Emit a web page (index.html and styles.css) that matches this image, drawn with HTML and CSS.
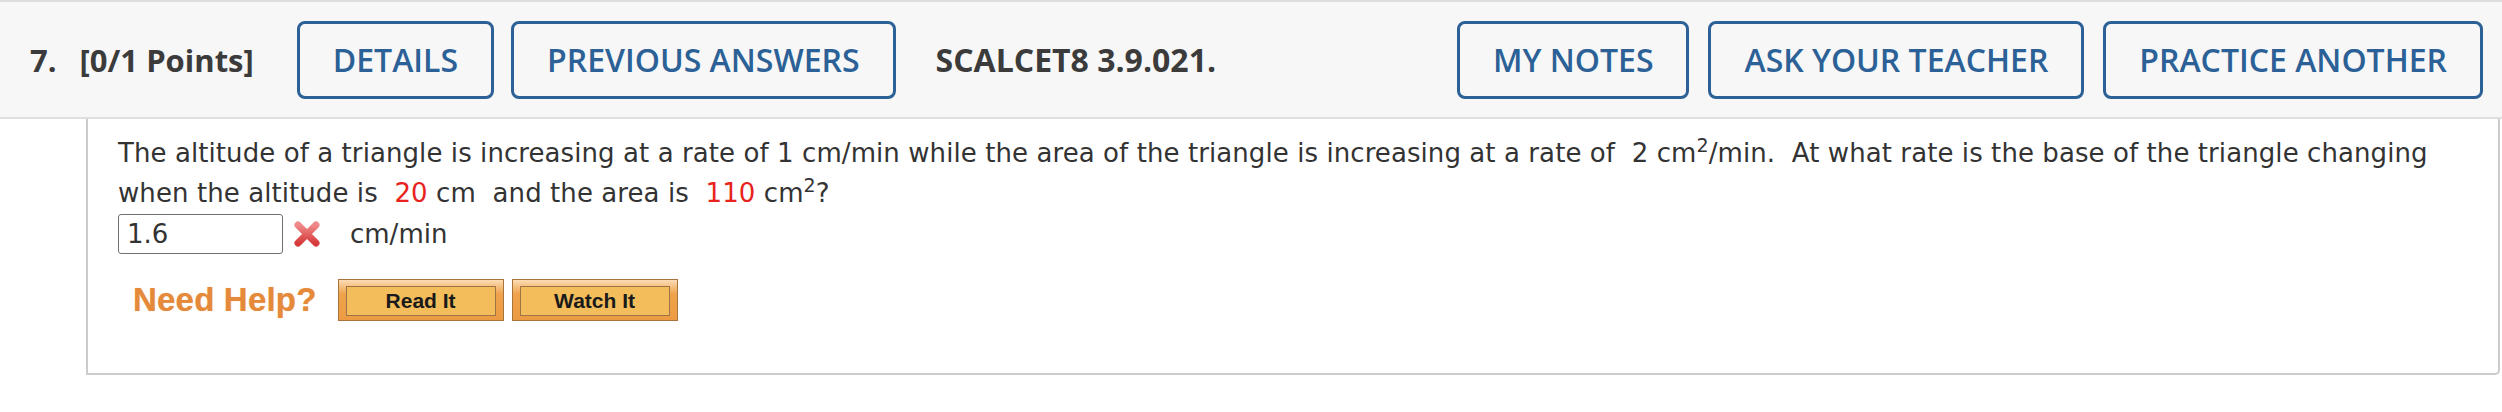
FILE: index.html
```html
<!DOCTYPE html>
<html lang="en">
<head>
<meta charset="utf-8">
<title>Question 7</title>
<link rel="stylesheet" href="styles.css">
</head>
<body>
<div class="qheader">
  <span class="qnum">7.</span>
  <span class="qpoints">[0/1 Points]</span>
  <button class="hbtn first">DETAILS</button>
  <button class="hbtn">PREVIOUS ANSWERS</button>
  <span class="qcode">SCALCET8 3.9.021.</span>
  <span class="spacer"></span>
  <div class="rbtns">
    <button class="hbtn">MY NOTES</button>
    <button class="hbtn">ASK YOUR TEACHER</button>
    <button class="hbtn">PRACTICE ANOTHER</button>
  </div>
</div>
<div class="qbody">
  <p class="qtext">The altitude of a triangle is increasing at a rate of 1 cm/min while the area of the triangle is increasing at a rate of &nbsp;2 cm<sup>2</sup>/min.&nbsp; At what rate is the base of the triangle changing when the altitude is &nbsp;<span class="red">20</span> cm &nbsp;and the area is &nbsp;<span class="red">110</span> cm<sup>2</sup>?</p>
  <div class="answer">
    <input class="ans" type="text" value="1.6" readonly>
    <svg class="xmark" width="28" height="28" viewBox="0 0 28 28" aria-hidden="true">
      <defs>
        <linearGradient id="xg" x1="0" y1="0" x2="0" y2="1">
          <stop offset="0" stop-color="#f08a8a"/>
          <stop offset="1" stop-color="#d63a3a"/>
        </linearGradient>
      </defs>
      <path d="M5 5 L23 23 M23 5 L5 23" stroke="url(#xg)" stroke-width="7" stroke-linecap="round"/>
    </svg>
    <span class="unit">cm/min</span>
  </div>
  <div class="help">
    <span class="needhelp">Need Help?</span>
    <button class="obtn"><span>Read It</span></button>
    <button class="obtn"><span>Watch It</span></button>
  </div>
</div>
</body>
</html>
```
FILE: styles.css
```css
html, body {
  margin: 0;
  padding: 0;
  background: #ffffff;
}

.qheader {
  display: flex;
  align-items: center;
  height: 115px;
  padding: 0 19px 0 30px;
  background: #f7f7f7;
  border-top: 2px solid #dedede;
  border-bottom: 2px solid #dedede;
  font-family: "Open Sans", "Liberation Sans", sans-serif;
}

.qnum, .qpoints, .qcode {
  font-size: 31px;
  font-weight: 700;
  color: #3b3b3b;
}

.qnum {
  margin-right: 23px;
}

.qcode {
  margin-left: 40px;
  font-size: 32px;
}

.spacer {
  flex: 1;
}

.rbtns {
  display: flex;
  gap: 19px;
}

.hbtn {
  height: 78px;
  margin: 0 0 0 17px;
  padding: 0 33px;
  border: 3px solid #2b6196;
  border-radius: 8px;
  background: transparent;
  color: #2b6196;
  font-family: "Open Sans", "Liberation Sans", sans-serif;
  font-size: 32px;
  font-weight: 600;
  line-height: 1;
}

.hbtn.first {
  margin-left: 43px;
}

.rbtns .hbtn {
  margin: 0;
}

.qbody {
  margin-left: 86px;
  margin-right: 2px;
  padding: 14px 30px 52px 30px;
  border: 2px solid #cccccc;
  border-top: none;
  border-bottom-right-radius: 5px;
  font-family: "DejaVu Sans", Verdana, sans-serif;
  font-size: 26px;
  color: #333333;
}

.qtext {
  margin: 0;
  line-height: 40px;
  letter-spacing: 0.08px;
}

.qtext sup {
  font-size: 19px;
  line-height: 0;
}

.red {
  color: #e8221c;
}

.answer {
  display: flex;
  align-items: center;
  margin-top: 1px;
}

.ans {
  box-sizing: border-box;
  width: 165px;
  height: 40px;
  margin: 0;
  padding: 0 8px;
  border: 1px solid #707070;
  border-radius: 3px;
  font-family: "DejaVu Sans", Verdana, sans-serif;
  font-size: 26px;
  color: #333333;
  background: #ffffff;
}

.xmark {
  margin-left: 10px;
}

.unit {
  margin-left: 29px;
}

.help {
  display: flex;
  align-items: center;
  margin-top: 25px;
  padding-left: 15px;
}

.needhelp {
  margin-right: 21px;
  font-family: "Liberation Sans", Arial, sans-serif;
  font-size: 33px;
  font-weight: 700;
  letter-spacing: 0.2px;
  color: #e5893a;
  text-shadow: 0 0 1px rgba(229, 137, 58, 0.6);
}

.obtn {
  box-sizing: border-box;
  width: 166px;
  height: 42px;
  margin: 0 8px 0 0;
  padding: 6px 7px;
  border: 1px solid #a8743a;
  background: linear-gradient(#fbdcb4 0%, #efa24c 35%, #ec9b42 100%);
  cursor: pointer;
}

.obtn span {
  display: flex;
  align-items: center;
  justify-content: center;
  height: 100%;
  border: 1px solid #9c7446;
  background: #f3bd5b;
  font-family: "Liberation Sans", Arial, sans-serif;
  font-size: 21px;
  font-weight: 700;
  color: #1a1a1a;
}
```
